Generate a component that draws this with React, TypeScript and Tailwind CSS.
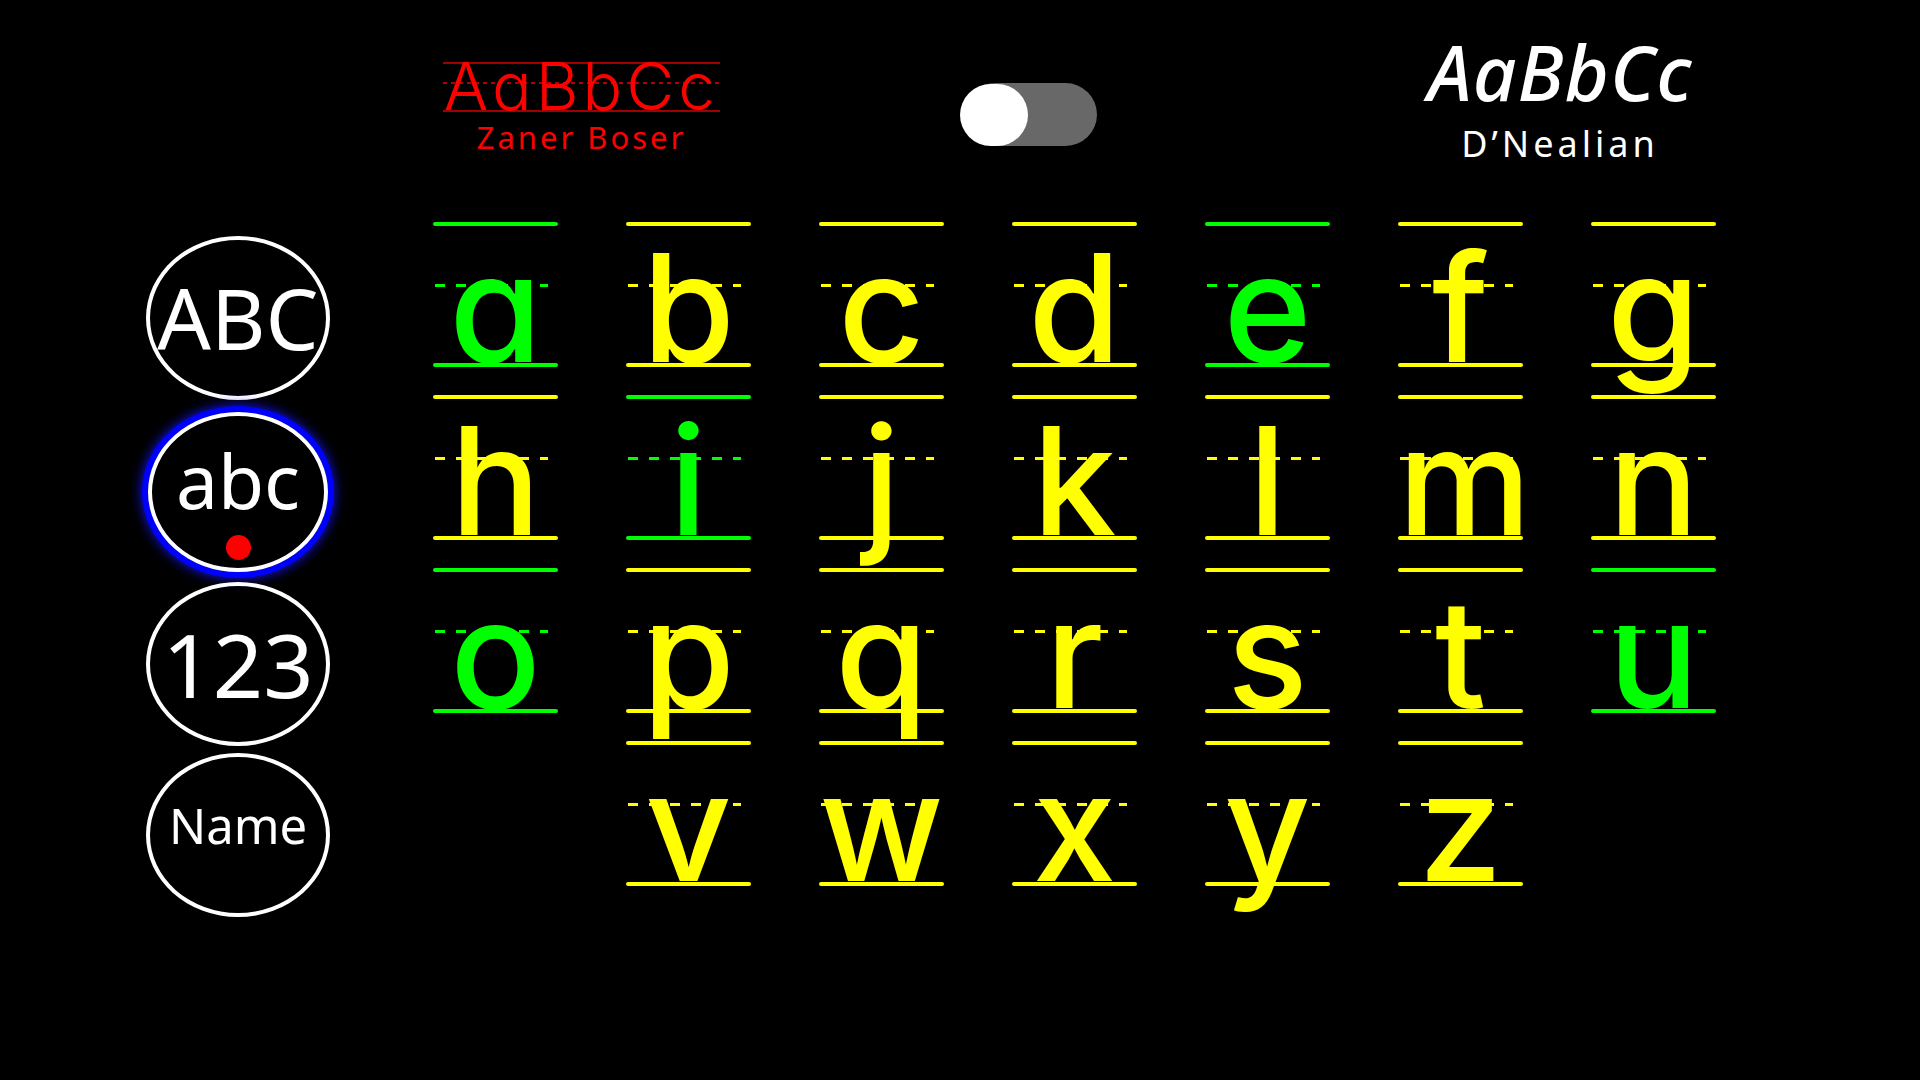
import React from 'react';

// colour sets for the guide lines + letters
const tones = {
  green: {
    line: 'bg-[#00ff00]',
    dash: 'bg-[repeating-linear-gradient(90deg,#00ff00_0_10px,transparent_10px_21px)]',
    text: 'text-[#00ff00]',
  },
  yellow: {
    line: 'bg-[#ffff00]',
    dash: 'bg-[repeating-linear-gradient(90deg,#ffff00_0_10px,transparent_10px_21px)]',
    text: 'text-[#ffff00]',
  },
};

const vowels = 'aeiou';
const letters = 'abcdefghijklmnopqrstuvwxyz'.split('');

function LetterCell({ ch }: { ch: string }) {
  const t = vowels.includes(ch) ? tones.green : tones.yellow;
  return (
    <div className={`relative h-[173px] w-[125px] ${ch === 'v' ? 'col-start-2' : ''}`}>
      {/* handwriting guide lines */}
      <div className={`absolute left-0 right-0 top-0 h-[4px] rounded-full ${t.line}`} />
      <div className={`absolute left-[2px] right-[10px] top-[62px] h-[3px] ${t.dash}`} />
      <div className={`absolute left-0 right-0 top-[141px] h-[4px] rounded-full ${t.line}`} />
      <span
        className={`absolute inset-x-0 top-[11px] text-center font-['Inter'] text-[150px] font-medium leading-none [font-feature-settings:'cv11'] ${t.text}`}
      >
        {ch}
      </span>
    </div>
  );
}

function Bubble({ children, className = '' }: { children: React.ReactNode; className?: string }) {
  return (
    <div
      className={`flex h-[164px] w-[184px] flex-col items-center justify-center rounded-[50%] border-4 border-white text-white ${className}`}
    >
      {children}
    </div>
  );
}

export default function App() {
  return (
    <div className="relative h-[1080px] w-[1920px] overflow-hidden bg-black font-['Noto_Sans',sans-serif]">
      {/* header: font styles + switch */}
      <header className="flex h-[222px] items-start">
        <div className="ml-[443px] mt-[62px] flex w-[277px] flex-col items-center">
          <div className="relative h-[50px] w-[277px]">
            <div className="absolute inset-x-0 top-0 h-[2px] bg-[#a00000]" />
            <div className="absolute inset-x-0 top-[20px] h-[2px] bg-[repeating-linear-gradient(90deg,#b00000_0_4px,transparent_4px_8px)]" />
            <div className="absolute inset-x-0 top-[48px] h-[2px] bg-[#a00000]" />
            <span className="absolute inset-x-0 top-0 h-[48px] text-center font-['Inter'] text-[66px] font-light leading-[48px] tracking-[4px] text-[#ff0000] [font-feature-settings:'cv11']">
              AaBbCc
            </span>
          </div>
          <span className="mt-[10px] text-[31px] leading-none tracking-[3px] text-[#ff0000]">Zaner Boser</span>
        </div>

        <div className="relative ml-[240px] mt-[83px] flex h-[63px] w-[137px] items-center">
          <div className="ml-[4px] h-[63px] w-[133px] rounded-full bg-[#686868]" />
          <div className="absolute left-0 top-[1px] h-[62px] w-[68px] rounded-full bg-white" />
        </div>

        <div className="ml-[326px] mt-[34px] flex w-[274px] flex-col items-center text-white">
          <span className="text-[76px] font-medium italic leading-none tracking-[1px]">AaBbCc</span>
          <span className="mt-[16px] text-[36px] leading-none tracking-[4px]">D’Nealian</span>
        </div>
      </header>

      <main className="flex items-start">
        {/* case selector */}
        <nav className="ml-[146px] mt-[14px] flex w-[184px] flex-col items-center">
          <Bubble>
            <span className="text-[84px] leading-none">ABC</span>
          </Bubble>
          <Bubble className="mt-[12px] !h-[160px] !w-[180px] !justify-start pt-[27px] shadow-[0_0_0_6px_#0000ff,0_0_12px_7px_rgba(20,20,255,0.85)]">
            <span className="text-[75px] leading-none">abc</span>
            <span className="mt-[17px] h-[25px] w-[25px] rounded-full bg-[#ff0000]" />
          </Bubble>
          <Bubble className="mt-[10px]">
            <span className="text-[88px] leading-none">123</span>
          </Bubble>
          <Bubble className="mt-[7px] !justify-start pt-[44px]">
            <span className="text-[49px] leading-none">Name</span>
          </Bubble>
        </nav>

        {/* alphabet grid */}
        <section className="ml-[103px] grid grid-cols-[repeat(7,125px)] gap-x-[68px]">
          {letters.map((ch) => (
            <LetterCell key={ch} ch={ch} />
          ))}
        </section>
      </main>
    </div>
  );
}
